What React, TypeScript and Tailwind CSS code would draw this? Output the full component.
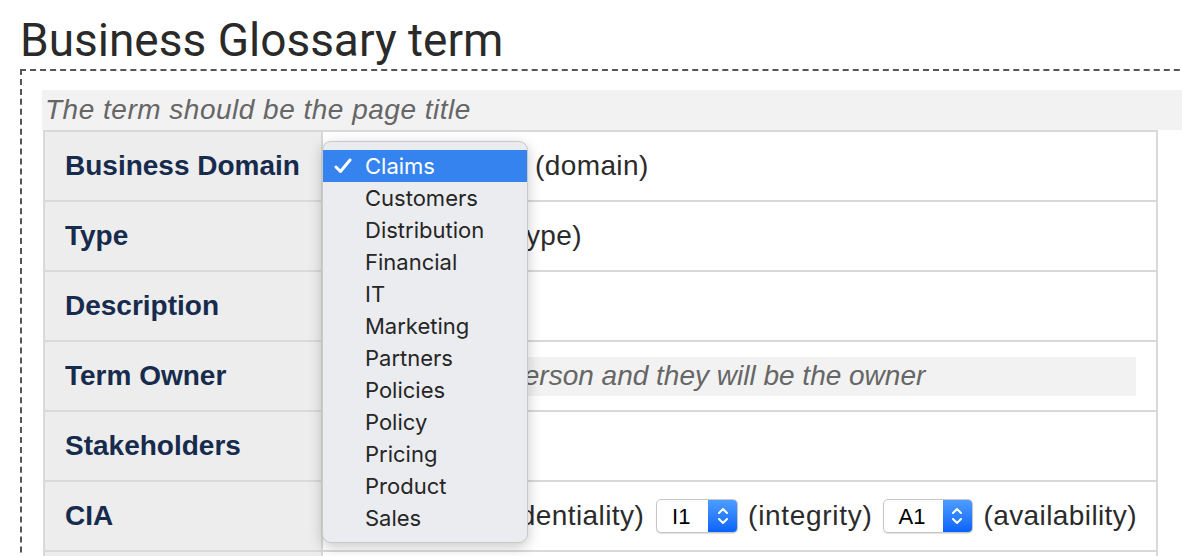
import React from "react";

const sans = "font-['Liberation_Sans',Arial,sans-serif]";

const domains = [
  "Claims",
  "Customers",
  "Distribution",
  "Financial",
  "IT",
  "Marketing",
  "Partners",
  "Policies",
  "Policy",
  "Pricing",
  "Product",
  "Sales",
];

function Stepper() {
  return (
    <svg width="12" height="20" viewBox="0 0 12 20" fill="none" stroke="white" strokeWidth="2" strokeLinecap="round" strokeLinejoin="round">
      <path d="M2 7 L6 3 L10 7" />
      <path d="M2 13 L6 17 L10 13" />
    </svg>
  );
}

function MiniSelect({ value, width }: { value: string; width: string }) {
  return (
    <span
      className={`inline-flex h-[34px] ${width} shrink-0 items-stretch overflow-hidden rounded-[5px] border border-[#c6c6c6] bg-white tracking-normal shadow-[0_1px_1px_rgba(0,0,0,0.12)]`}
    >
      <span className="flex flex-1 items-center pl-[15px] text-[22px] text-black">{value}</span>
      <span className="flex w-[29px] items-center justify-center bg-gradient-to-b from-[#4d9cff] to-[#0a62fb]">
        <Stepper />
      </span>
    </span>
  );
}

function Label({ children }: { children?: React.ReactNode }) {
  return (
    <th className="h-[70px] w-[278px] border-2 border-[#d9d9d9] bg-[#ededed] pl-[20px] text-left align-middle text-[28px] font-bold text-[#172b4d]">
      {children}
    </th>
  );
}

function Cell({ children }: { children?: React.ReactNode }) {
  return (
    <td className="h-[70px] whitespace-nowrap border-2 border-[#d9d9d9] bg-white px-[20px] align-middle text-[28px] tracking-[0.4px] text-[#2b2b2b]">
      {children}
    </td>
  );
}

function DomainMenu() {
  return (
    <div className="absolute left-[322px] top-[141px] w-[206px] rounded-[9px] border border-[#c9c9cc] bg-[#ebecef] pt-[8px] pb-[8px] font-['Inter',sans-serif] shadow-[0_4px_14px_rgba(0,0,0,0.22)]">
      {domains.map((d, i) => (
        <div
          key={d}
          className={
            i === 0
              ? "relative flex h-[32px] items-center bg-[#3583ee] pl-[42px] text-[22px] text-white"
              : "flex h-[32px] items-center pl-[42px] text-[22px] text-[#262626]"
          }
        >
          {i === 0 ? (
            <svg className="absolute left-[11px] top-[8px]" width="18" height="16" viewBox="0 0 18 16" fill="none" stroke="white" strokeWidth="3" strokeLinecap="round" strokeLinejoin="round">
              <path d="M2 9 L6.5 13.5 L16 2" />
            </svg>
          ) : null}
          {d}
        </div>
      ))}
    </div>
  );
}

export default function App() {
  return (
    <div className={`relative h-[556px] w-[1182px] overflow-hidden bg-white ${sans}`}>
      <h1 className="pl-[20px] pt-[14px] font-['Roboto',sans-serif] text-[46px] leading-[52px] text-[#2a2a2a]">
        Business Glossary term
      </h1>

      <div className="ml-[20px] mt-[3px] w-[1220px] border-l-2 border-t-2 border-dashed border-[#555] pl-[20px] pt-[19px]">
        <div className="flex h-[40px] items-center bg-[#f2f2f2] pl-[3px] text-[28px] italic tracking-[0.5px] text-[#666]">
          The term should be the page title
        </div>

        <table className="ml-[1px] w-[1115px] table-fixed border-collapse">
          <tbody>
            <tr>
              <Label>Business Domain</Label>
              <Cell>
                <span className="mr-[10px] inline-block h-[34px] w-[182px] rounded-[5px] border border-[#c6c6c6] align-middle" />
                (domain)
              </Cell>
            </tr>
            <tr>
              <Label>Type</Label>
              <Cell>
                <span className="mr-[10px] inline-block h-[34px] w-[155px] rounded-[5px] border border-[#c6c6c6] align-middle" />
                (type)
              </Cell>
            </tr>
            <tr>
              <Label>Description</Label>
              <Cell />
            </tr>
            <tr>
              <Label>Term Owner</Label>
              <Cell>
                <div className="flex h-[39px] items-center bg-[#f2f2f2] pl-[6px] italic tracking-normal text-[#666]">
                  @mention a person and they will be the owner
                </div>
              </Cell>
            </tr>
            <tr>
              <Label>Stakeholders</Label>
              <Cell />
            </tr>
            <tr>
              <Label>CIA</Label>
              <Cell>
                <div className="flex items-center">
                  <MiniSelect value="C1" width="w-[96px]" />
                  <span className="ml-[10px]">(confidentiality)</span>
                  <span className="ml-[12px] flex"><MiniSelect value="I1" width="w-[82px]" /></span>
                  <span className="ml-[10px] tracking-[0.7px]">(integrity)</span>
                  <span className="ml-[10px] flex"><MiniSelect value="A1" width="w-[90px]" /></span>
                  <span className="ml-[11px]">(availability)</span>
                </div>
              </Cell>
            </tr>
            <tr>
              <Label />
              <Cell />
            </tr>
          </tbody>
        </table>
      </div>

      <DomainMenu />
    </div>
  );
}
